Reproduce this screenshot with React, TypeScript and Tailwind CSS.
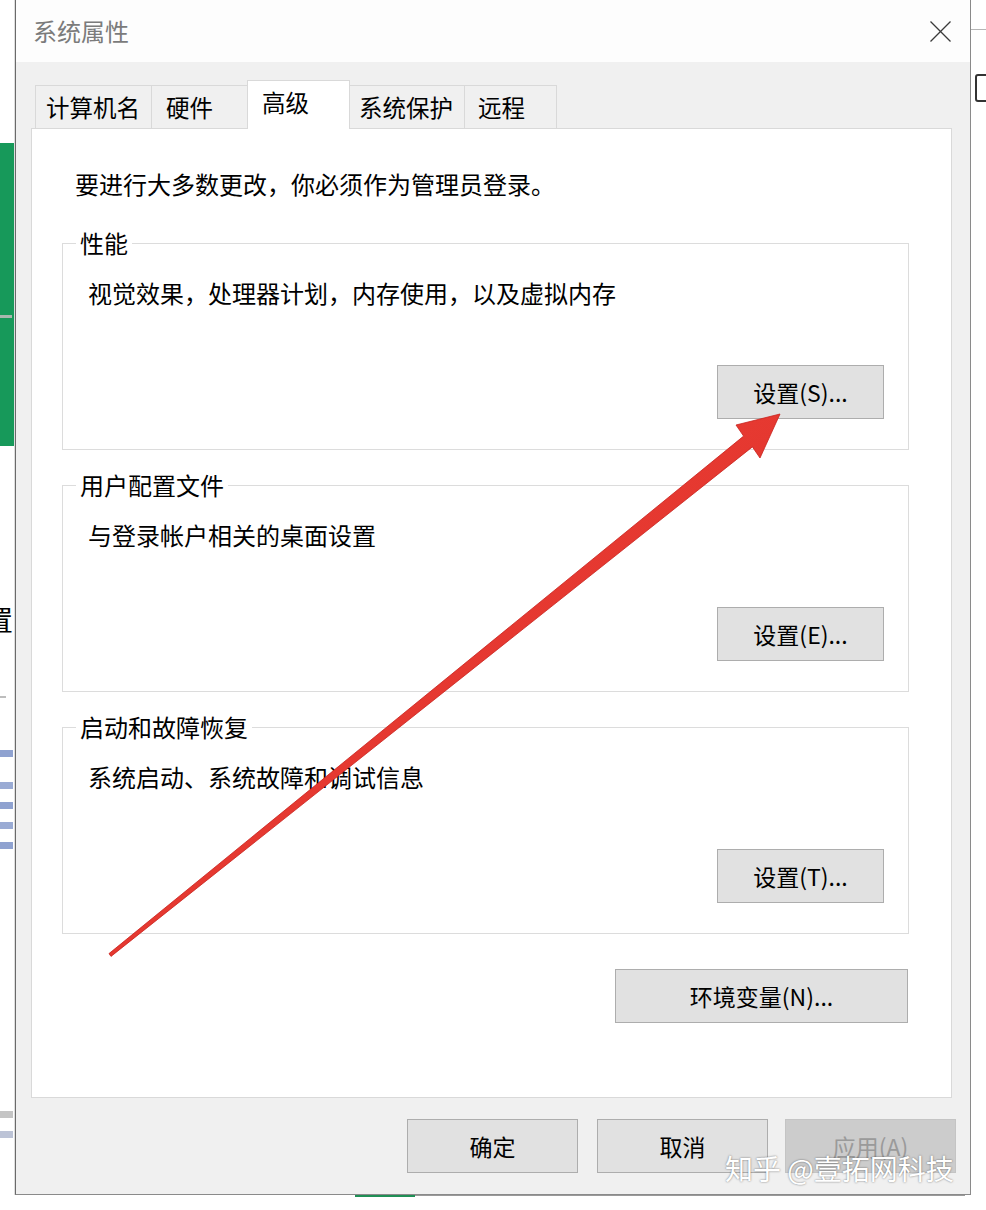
import React from "react";

function Btn({ w, children, disabled }: { w: string; children: React.ReactNode; disabled?: boolean }) {
  return (
    <div
      className={
        "h-[54px] flex items-center justify-center text-[23px] leading-[32px] border " +
        w +
        (disabled
          ? " bg-[#cccccc] border-[#c4c4c4] text-[#9a9a9a]"
          : " bg-[#e1e1e1] border-[#adadad] text-black")
      }
    >
      {children}
    </div>
  );
}

function Group({ title, desc, btn, first }: { title: string; desc: string; btn: string; first?: boolean }) {
  return (
    <fieldset className={"w-[847px] border border-[#dcdcdc] " + (first ? "mt-[27px]" : "mt-[19px]")}>
      <legend className="ml-[13px] px-[4px] text-[24px] leading-[32px]">{title}</legend>
      <div className="pl-[25px] pt-[18px] text-[24px] leading-[32px]">{desc}</div>
      <div className="flex justify-end pr-[24px] mt-[56px] pb-[30px]">
        <Btn w="w-[167px]">{btn}</Btn>
      </div>
    </fieldset>
  );
}

const tabs = [
  { label: "计算机名", w: "w-[117px]", pl: "pl-[10px]" },
  { label: "硬件", w: "w-[97px]", pl: "pl-[14px]" },
  { label: "高级", w: "w-[103px]", pl: "pl-[14px]", active: true },
  { label: "系统保护", w: "w-[116px]", pl: "pl-[9px]" },
  { label: "远程", w: "w-[93px]", pl: "pl-[13px]" },
];

export default function App() {
  return (
    <div className="relative w-[986px] h-[1210px] bg-white overflow-hidden font-['Noto_Sans_CJK_SC',sans-serif] text-black">
      <div className="flex h-[1195px]">
        {/* left background strip */}
        <div className="w-[15px] flex flex-col overflow-hidden border-r border-[#dedede]">
          <div className="mt-[143px] h-[303px] bg-[#17995a] flex flex-col">
            <div className="mt-[172px] h-[3px] w-[12px] bg-[#a9b8af]" />
          </div>
          <div className="mt-[156px] -ml-[15px] text-[28px] leading-[34px] text-black">置</div>
          <div className="mt-[60px] h-[2px] w-[6px] bg-[#bdbdbd]" />
          <div className="mt-[52px] flex flex-col gap-[13px]">
            <div className="h-[7px] w-[13px] bg-[#8fa2d0]" />
            <div className="mt-[12px] h-[7px] w-[13px] bg-[#9aabd4]" />
            <div className="h-[7px] w-[13px] bg-[#8fa2d0]" />
            <div className="h-[7px] w-[13px] bg-[#9aabd4]" />
            <div className="h-[7px] w-[13px] bg-[#8fa2d0]" />
          </div>
          <div className="mt-[262px] flex flex-col gap-[13px]">
            <div className="h-[7px] w-[13px] bg-[#c4c4c4]" />
            <div className="h-[7px] w-[13px] bg-[#bcc3d6]" />
          </div>
        </div>

        {/* window */}
        <div className="flex flex-col w-[956px] h-[1195px] border-x border-b border-l-[#6a6a6a] border-r-[#8a8a8a] border-b-[#8a8a8a] bg-[#f0f0f0]">
          {/* title bar */}
          <div className="h-[62px] bg-[#fdfdfd] flex items-center justify-between pl-[17px] pr-[19px]">
            <span className="text-[24px] leading-[32px] text-[#7b7b7b]">系统属性</span>
            <svg width="21" height="21" viewBox="0 0 21 21">
              <line x1="0.5" y1="0.5" x2="20.5" y2="20.5" stroke="#3a3a3a" strokeWidth="1.2" />
              <line x1="20.5" y1="0.5" x2="0.5" y2="20.5" stroke="#3a3a3a" strokeWidth="1.2" />
            </svg>
          </div>

          {/* body */}
          <div className="flex flex-col pl-[15px] pr-[18px] pt-[18px]">
            <div className="relative z-10 flex items-end h-[48px] pl-[4px]">
              {tabs.map((t, i) =>
                t.active ? (
                  <div
                    key={t.label}
                    className={"-ml-px h-[49px] -mb-px bg-white border-x border-t border-[#d9d9d9] flex items-center text-[23.5px] leading-[32px] pb-[6px] " + t.w + " " + t.pl}
                  >
                    {t.label}
                  </div>
                ) : (
                  <div
                    key={t.label}
                    className={(i === 0 ? "" : "-ml-px ") + "h-[43px] bg-[#f0f0f0] border-x border-t border-[#d9d9d9] flex items-center text-[23.5px] leading-[32px] pb-[1px] " + t.w + " " + t.pl}
                  >
                    {t.label}
                  </div>
                )
              )}
            </div>

            <div className="h-[970px] bg-white border border-[#d9d9d9] flex flex-col pt-[39px] pl-[30px] pr-[42px]">
              <div className="ml-[13px] text-[24px] leading-[32px]">要进行大多数更改，你必须作为管理员登录。</div>
              <Group first title="性能" desc="视觉效果，处理器计划，内存使用，以及虚拟内存" btn="设置(S)..." />
              <Group title="用户配置文件" desc="与登录帐户相关的桌面设置" btn="设置(E)..." />
              <Group title="启动和故障恢复" desc="系统启动、系统故障和调试信息" btn="设置(T)..." />
              <div className="flex justify-end mt-[35px] pr-[1px]">
                <Btn w="w-[293px]">环境变量(N)...</Btn>
              </div>
            </div>

            <div className="flex justify-end mt-[21px] -mr-[4px]">
              <Btn w="w-[171px]">确定</Btn>
              <div className="ml-[19px]">
                <Btn w="w-[171px]">取消</Btn>
              </div>
              <div className="ml-[17px]">
                <Btn w="w-[171px]" disabled>
                  应用(A)
                </Btn>
              </div>
            </div>
          </div>
        </div>

        {/* right background strip */}
        <div className="w-[15px] flex flex-col overflow-hidden">
          <div className="mt-[29px] h-px w-[15px] bg-[#b5b5b5]" />
          <div className="mt-[44px] ml-[4px] h-[28px] w-[16px] rounded-[3px] border-2 border-[#333]" />
        </div>
      </div>

      {/* bottom strip */}
      <div className="flex h-[15px]">
        <div className="ml-[355px] w-[60px] h-[2px] bg-[#1f8f55]" />
        <div className="w-[550px] h-px bg-[#9a9a9a]" />
      </div>

      {/* red arrow overlay */}
      <svg className="absolute left-0 top-0 pointer-events-none" width="986" height="1210" viewBox="0 0 986 1210">
        <defs>
          <linearGradient id="ag" x1="0" y1="0" x2="1" y2="1">
            <stop offset="0" stopColor="#f2473d" />
            <stop offset="1" stopColor="#d92a24" />
          </linearGradient>
        </defs>
        <polygon
          points="109,953.6 743.6,436.1 736,425 780,414 760,458 752.4,446.9 111,956.4"
          fill="url(#ag)"
          stroke="#c8221d"
          strokeWidth="0.8"
          strokeLinejoin="round"
        />
      </svg>

      {/* watermark */}
      <div className="absolute left-[725px] top-[1150px] text-[28px] leading-[36px] text-white [text-shadow:0_0_2px_rgba(0,0,0,0.55)] whitespace-nowrap">
        知乎 @壹拓网科技
      </div>
    </div>
  );
}
